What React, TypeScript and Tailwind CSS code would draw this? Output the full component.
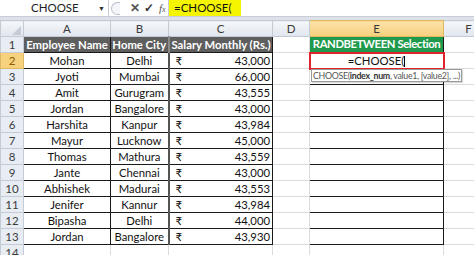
import React from 'react'

const rows = [
  ['Mohan', 'Delhi', '43,000'],
  ['Jyoti', 'Mumbai', '66,000'],
  ['Amit', 'Gurugram', '43,555'],
  ['Jordan', 'Bangalore', '43,000'],
  ['Harshita', 'Kanpur', '43,984'],
  ['Mayur', 'Lucknow', '45,000'],
  ['Thomas', 'Mathura', '43,559'],
  ['Jante', 'Chennai', '43,000'],
  ['Abhishek', 'Madurai', '43,553'],
  ['Jenifer', 'Kannur', '43,984'],
  ['Bipasha', 'Delhi', '44,000'],
  ['Jordan', 'Bangalore', '43,930'],
]

const hdr = 'h-[16px] p-0 leading-[14px] text-center text-[11.5px] text-[#3b3b3b] font-normal border border-[#c5cbd5] bg-gradient-to-b from-[#f4f6f9] to-[#e1e6ee]'
const rowHdr = 'h-[16px] p-0 leading-[14px] text-center text-[11.5px] text-[#3b3b3b] border border-[#c5cbd5] bg-[#e8edf4]'
const data = 'h-[16px] p-0 leading-[14px] border border-[#1a1a1a] text-[11.3px] text-[#111] whitespace-nowrap overflow-hidden'
const grid = 'h-[16px] p-0 leading-[14px] border border-[#dcdcdc]'
const title = 'h-[16px] p-0 leading-[14px] border border-[#1a1a1a] text-[11.3px] font-bold text-white whitespace-nowrap overflow-hidden'

export default function App() {
  return (
    <div className="relative w-[474px] h-[255px] overflow-hidden bg-white" style={{ fontFamily: 'Lato, "Open Sans", sans-serif' }}>
      {/* formula bar */}
      <div className="flex h-[17px] items-stretch border-b border-[#c9ced6] bg-white">
        <div className="relative w-[109px] flex items-center border-r border-[#c9ced6]">
          <span className="ml-[31px] text-[11.5px] text-[#222]">CHOOSE</span>
          <span className="absolute right-[3px] top-[5px] text-[7px] leading-[7px] text-[#333]">▼</span>
        </div>
        <div className="flex w-[59px] items-center bg-white">
          <div className="ml-[2px] h-[13px] w-[9px] rounded-l-full border border-r-0 border-[#b9c0cb] bg-[#f3f5f8]" />
          <span className="ml-[10px] text-[12px] font-bold text-[#555]">✕</span>
          <span className="ml-[4px] text-[12px] font-bold text-[#333]">✓</span>
          <span className="ml-[5px] text-[11px] italic text-[#555]" style={{ fontFamily: '"Liberation Serif", serif' }}>f<span className="text-[8px]">x</span></span>
        </div>
        <div className="flex flex-1 items-center border-l border-[#c9ced6]">
          <div className="flex h-full w-[72px] items-center bg-[#f6f500] pl-[5px] text-[11.5px] text-[#111]">=CHOOSE(</div>
        </div>
      </div>
      <div className="h-[3px] bg-[#dde2ea]" />

      <table className="table-fixed border-collapse" style={{ width: 493 }}>
        <colgroup>
          <col style={{ width: 23 }} />
          <col style={{ width: 87 }} />
          <col style={{ width: 58 }} />
          <col style={{ width: 104 }} />
          <col style={{ width: 37 }} />
          <col style={{ width: 134 }} />
          <col style={{ width: 50 }} />
        </colgroup>
        <thead>
          <tr>
            <th className={hdr}>
              <div className="relative h-[14px] w-full">
                <svg className="absolute right-[2px] bottom-[1px]" width="9" height="9"><polygon points="9,0 9,9 0,9" fill="#c6ccd5" /></svg>
              </div>
            </th>
            {['A', 'B', 'C', 'D'].map(c => <th key={c} className={hdr}>{c}</th>)}
            <th className="h-[16px] p-0 leading-[14px] text-center text-[11.5px] font-normal text-[#3b3b3b] border border-[#e0b862] bg-gradient-to-b from-[#fbe3a8] to-[#f6cf7c]">E</th>
            <th className={hdr}>F</th>
          </tr>
        </thead>
        <tbody>
          <tr>
            <td className={rowHdr}>1</td>
            <td className={title + ' bg-[#5e5e5e] text-center'}>Employee Name</td>
            <td className={title + ' bg-[#5e5e5e] text-center'}>Home City</td>
            <td className={title + ' border-l-2 border-l-[#8a8a8a] bg-[#5e5e5e] pl-[2px] text-left'}>Salary Monthly (Rs.)</td>
            <td className={grid} />
            <td className={title + ' bg-[#1f9a4c] text-center tracking-[-0.4px]'}>RANDBETWEEN Selection</td>
            <td className={grid} />
          </tr>
          {rows.map((r, i) => (
            <tr key={i}>
              <td className={i === 0 ? 'h-[16px] p-0 leading-[14px] text-center text-[11.5px] text-[#8a5a00] border border-[#e0b862] bg-[#f7d27e]' : rowHdr}>{i + 2}</td>
              <td className={data + ' text-center'}>{r[0]}</td>
              <td className={data + ' text-center'}>{r[1]}</td>
              <td className={data + ' border-l-2 border-l-[#555]'}>
                <div className="flex justify-between px-[2px]">
                  <span className="pl-[4px]">₹</span>
                  <span>{r[2]}</span>
                </div>
              </td>
              <td className={grid} />
              {i === 0 ? (
                <td className="h-[16px] p-0 leading-[14px] border-2 border-[#e0242b] text-center text-[11.3px] text-[#111]">
                  =CHOOSE(<span className="inline-block h-[11px] w-[1px] bg-black align-middle" />
                </td>
              ) : (
                <td className={data} />
              )}
              <td className={grid} />
            </tr>
          ))}
          <tr>
            <td className={rowHdr}>14</td>
            <td className={grid} /><td className={grid} /><td className={grid} /><td className={grid} /><td className={grid} /><td className={grid} />
          </tr>
        </tbody>
      </table>

      {/* function tooltip */}
      <div className="absolute left-[311px] top-[69px] z-10 h-[13px] w-max border border-[#9a9a9a] bg-white px-[1px] text-[8.8px] leading-[11px] tracking-[-0.3px] text-[#555] whitespace-nowrap shadow-[1px_1px_1px_rgba(0,0,0,0.15)]">
        CHOOSE(<b className="text-[#333]">index_num</b>, value1, [value2], ...)
      </div>
    </div>
  )
}
